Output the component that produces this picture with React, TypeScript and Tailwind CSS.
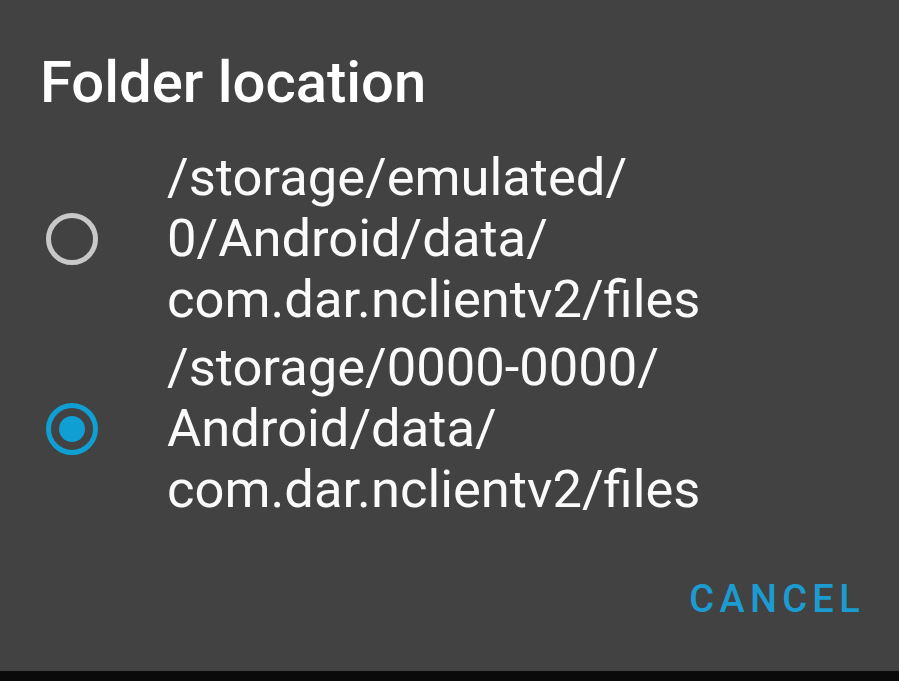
import React from "react";

type Option = {
  id: string;
  lines: string[];
};

const options: Option[] = [
  { id: "internal", lines: ["/storage/emulated/", "0/Android/data/", "com.dar.nclientv2/files"] },
  { id: "sd", lines: ["/storage/0000-0000/", "Android/data/", "com.dar.nclientv2/files"] },
];

function Radio({ checked }: { checked: boolean }) {
  return (
    <svg width="52" height="52" viewBox="0 0 52 52" className="shrink-0">
      <circle
        cx="26"
        cy="26"
        r="23.5"
        fill="none"
        stroke={checked ? "#0f9fd3" : "#c8c8c8"}
        strokeWidth="5"
      />
      {checked && <circle cx="26" cy="26" r="13" fill="#0f9fd3" />}
    </svg>
  );
}

export default function App() {
  const selected = "sd";

  return (
    <div className="flex h-[681px] w-[899px] flex-col bg-[#424242] font-['Roboto','Liberation_Sans',sans-serif]">
      <div className="flex flex-1 flex-col">
        <h1 className="pl-[40px] pt-[49px] text-[58px] font-medium leading-[66px] text-white">
          Folder location
        </h1>

        <div className="mt-[32px] flex flex-col gap-[7px]">
          {options.map((opt) => (
            <div key={opt.id} className="flex items-center">
              <div className="flex w-[167px] justify-start pl-[46px]">
                <Radio checked={opt.id === selected} />
              </div>
              <div className="text-[52.5px] leading-[61px] text-[#fafafa]">
                {opt.lines.map((line) => (
                  <div key={line}>{line}</div>
                ))}
              </div>
            </div>
          ))}
        </div>

        <div className="mt-[57px] flex justify-end pr-[34px]">
          <span className="text-[38px] font-medium leading-[45px] tracking-[0.14em] text-[#1b9bd0]">
            CANCEL
          </span>
        </div>
      </div>
      <div className="h-[10px] bg-[#0a0a0a]" />
    </div>
  );
}
